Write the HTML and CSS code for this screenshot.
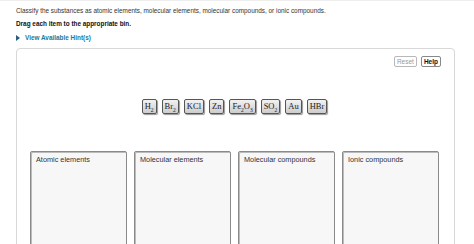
FILE: index.html
```html
<!DOCTYPE html>
<html lang="en">
<head>
    <meta charset="UTF-8">
    <title>Classify the substances</title>
    <link rel="stylesheet" href="styles.css">
</head>
<body>
    <div class="page">
        <p class="intro">Classify the substances as atomic elements, molecular elements, molecular compounds, or ionic compounds.</p>
        <p class="task">Drag each item to the appropriate bin.</p>
        <div class="hint"><span class="arrow"></span>View Available Hint(s)</div>

        <div class="workspace">
            <div class="tools">
                <button class="tool reset">Reset</button>
                <button class="tool help">Help</button>
            </div>

            <div class="tiles">
                <span class="tile">H<sub>2</sub></span>
                <span class="tile">Br<sub>2</sub></span>
                <span class="tile">KCl</span>
                <span class="tile">Zn</span>
                <span class="tile">Fe<sub>2</sub>O<sub>3</sub></span>
                <span class="tile">SO<sub>2</sub></span>
                <span class="tile">Au</span>
                <span class="tile">HBr</span>
            </div>

            <div class="bins">
                <div class="bin">Atomic elements</div>
                <div class="bin">Molecular elements</div>
                <div class="bin">Molecular compounds</div>
                <div class="bin">Ionic compounds</div>
            </div>
        </div>
    </div>
</body>
</html>
```

FILE: styles.css
```css
body {
    margin: 0;
    padding: 0;
    background: #fff;
    font-family: "Liberation Sans", Arial, sans-serif;
    color: #222;
    height: 244px;
    overflow: hidden;
}
.page {
    padding: 4px 19px 0 16px;
    border-top: 1px solid #eee;
}
.intro {
    margin: 0;
    font-size: 6.4px;
    line-height: 12px;
    color: #333;
}
.task {
    margin: 1px 0 0;
    font-size: 6.4px;
    line-height: 12px;
    font-weight: bold;
    color: #111;
}
.hint {
    margin-top: 2px;
    font-size: 6.4px;
    line-height: 12px;
    font-weight: bold;
    color: #1d7896;
    display: flex;
    align-items: center;
}
.arrow {
    width: 0;
    height: 0;
    border-top: 3px solid transparent;
    border-bottom: 3px solid transparent;
    border-left: 4px solid #2a5f76;
    margin-right: 5px;
}
.workspace {
    margin-top: 4px;
    border: 1px solid #d8d8d8;
    border-radius: 4px;
    height: 200px;
    padding: 7px 15px 0 13px;
}
.tools {
    display: flex;
    justify-content: flex-end;
    gap: 4px;
    margin-right: -2px;
}
.tool {
    font-family: "Liberation Sans", Arial, sans-serif;
    font-size: 6.5px;
    padding: 0 2px;
    height: 11px;
    background: #fff;
    border: 1px solid #b8b8b8;
    border-radius: 2px;
}
.reset {
    color: #999;
}
.help {
    color: #111;
    font-weight: bold;
    border-color: #888;
}
.tiles {
    display: flex;
    justify-content: center;
    gap: 5px;
    margin-top: 32px;
}
.tile {
    font-family: "Liberation Serif", "Times New Roman", serif;
    font-size: 8.5px;
    line-height: 13px;
    color: #222;
    padding: 0 2px;
    background: linear-gradient(#f2f2f2, #cdcdcd);
    border: 1px solid #555;
    border-radius: 2px;
    box-shadow: 1px 1px 1px #999;
}
.tile sub {
    font-size: 5.5px;
    line-height: 0;
}
.bins {
    display: grid;
    grid-template-columns: repeat(4, 1fr);
    gap: 7px;
    margin-top: 37px;
}
.bin {
    height: 110px;
    background: #f7f7f8;
    border: 1px solid #8a8a8a;
    border-radius: 2px;
    box-shadow: inset 1px 1px 0 #bbb;
    padding: 3px 5px;
    font-size: 7.3px;
    line-height: 10px;
    color: #333;
}
```
